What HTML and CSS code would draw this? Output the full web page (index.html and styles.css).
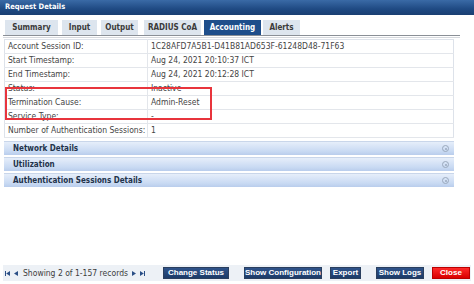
FILE: index.html
```html
<!DOCTYPE html>
<html>
<head>
<meta charset="utf-8">
<link rel="stylesheet" href="styles.css">
</head>
<body>
<div class="dialog">
  <div class="titlebar">Request Details</div>
  <div class="tabs">
    <div class="tab t1">Summary</div>
    <div class="tab t2">Input</div>
    <div class="tab t3">Output</div>
    <div class="tab t4">RADIUS CoA</div>
    <div class="tab t5 active">Accounting</div>
    <div class="tab t6">Alerts</div>
  </div>
  <div class="tabline"></div>
  <div class="content">
    <table class="details">
      <tr><td class="lbl">Account Session ID:</td><td>1C28AFD7A5B1-D41B81AD653F-61248D48-71F63</td></tr>
      <tr><td class="lbl">Start Timestamp:</td><td>Aug 24, 2021 20:10:37 ICT</td></tr>
      <tr><td class="lbl">End Timestamp:</td><td>Aug 24, 2021 20:12:28 ICT</td></tr>
      <tr><td class="lbl">Status:</td><td>Inactive</td></tr>
      <tr><td class="lbl">Termination Cause:</td><td>Admin-Reset</td></tr>
      <tr><td class="lbl">Service Type:</td><td>-</td></tr>
      <tr><td class="lbl">Number of Authentication Sessions:</td><td>1</td></tr>
    </table>
    <div class="highlight"></div>
    <div class="sections">
      <div class="section"><span>Network Details</span><i class="circ"></i></div>
      <div class="section"><span>Utilization</span><i class="circ"></i></div>
      <div class="section"><span>Authentication Sessions Details</span><i class="circ"></i></div>
    </div>
  </div>
  <div class="footer">
    <div class="pager">
      <svg class="nav" width="5" height="5" viewBox="0 0 5 5"><rect x="0" y="0" width="1" height="5" fill="#2b4f86"/><polygon points="5,0 1.2,2.5 5,5" fill="#2b4f86"/></svg>
      <svg class="nav" width="4" height="5" viewBox="0 0 4 5"><polygon points="4,0 0,2.5 4,5" fill="#2b4f86"/></svg>
      <span class="ptext">Showing 2 of 1-157 records</span>
      <svg class="nav" width="4" height="5" viewBox="0 0 4 5"><polygon points="0,0 4,2.5 0,5" fill="#2b4f86"/></svg>
      <svg class="nav" width="5" height="5" viewBox="0 0 5 5"><polygon points="0,0 3.8,2.5 0,5" fill="#2b4f86"/><rect x="4" y="0" width="1" height="5" fill="#2b4f86"/></svg>
    </div>
    <div class="btns">
      <div class="btn b1">Change Status</div>
      <div class="btn b2">Show Configuration</div>
      <div class="btn b3">Export</div>
      <div class="btn b4">Show Logs</div>
      <div class="btn close">Close</div>
    </div>
  </div>
</div>
</body>
</html>
```
FILE: styles.css
```css
html, body { margin: 0; padding: 0; background: #fff; }
body { width: 474px; height: 284px; overflow: hidden; font-family: "DejaVu Sans Condensed", "DejaVu Sans", sans-serif; }
.dialog { position: relative; width: 474px; height: 284px; }
.titlebar {
  height: 15px; line-height: 14px; padding-left: 5px;
  background: linear-gradient(#3a6aa6, #1f4a83 60%, #1a3f72);
  color: #fff; font-weight: bold; font-size: 7.5px;
}
.tabs { display: flex; gap: 4px; margin: 5px 0 0 5px; height: 15px; }
.tab {
  box-sizing: border-box; white-space: nowrap;
  background: #dde5ee; color: #3a3a3a; font-weight: bold; font-size: 8px;
  line-height: 15px; text-align: center;
}
.t1 { width: 53px; }
.t2 { width: 35px; }
.t3 { width: 37px; }
.t4 { width: 57px; margin-left: 2px; }
.t5 { width: 57px; margin-left: -1px; }
.t6 { width: 37px; margin-left: -2px; }
.tab.active { background: #1e4e8b; color: #fff; }
.tabline { margin: 0 14px 0 3px; height: 1px; border-top: 1px solid #8a8f96; border-bottom: 1px solid #d6d9de; }
.content { position: relative; margin: 1px 0 0 4px; width: 450px; }
.details { width: 450px; border-collapse: collapse; border: 1px solid #dde2ea; font-size: 8.5px; color: #444; }
.details td { height: 13px; padding: 0 0 0 3px; border-bottom: 1px solid #e3e6eb; white-space: nowrap; line-height: 13px; }
.details td.lbl { width: 139px; border-right: 1px solid #e3e6eb; }
.highlight { position: absolute; left: 1px; top: 48px; width: 203px; height: 29px; border: 2.5px solid #e8343c; }
.sections { display: flex; flex-direction: column; gap: 2px; margin-top: 3px; }
.section {
  height: 13px; display: flex; align-items: center; justify-content: space-between;
  padding: 0 5px 0 9px; border-top: 1px solid #c9d6ea;
  background: linear-gradient(#e6eefa, #c9daf3 70%, #b9cdec);
  font-size: 8px; font-weight: bold; color: #22324a; white-space: nowrap;
}
.circ { width: 5px; height: 5px; border: 1px solid #9aa8bc; border-radius: 50%; position: relative; }
.circ::after { content: ""; position: absolute; left: 1.5px; top: 1.5px; width: 2px; height: 2px; border-radius: 50%; background: #9aa8bc; }
.footer {
  position: absolute; left: 3px; top: 265px; width: 468px; height: 16px;
  display: flex; align-items: center; justify-content: space-between;
  background: #edf1f6;
}
.pager { display: flex; align-items: center; gap: 3px; padding-left: 2px; font-size: 8.5px; color: #3d3d3d; white-space: nowrap; }
.ptext { margin: 0 1px 0 1px; }
.nav { display: block; margin-right: 1px; }
.btns { display: flex; gap: 8px; padding-right: 1px; }
.btn {
  box-sizing: border-box; white-space: nowrap; text-align: center;
  height: 12px; line-height: 10px; font-size: 8px; font-weight: bold; color: #fff;
  background: linear-gradient(#2f538a, #1c3b68); font-family: "Liberation Sans", Arial, sans-serif;
  border: 1px solid #2a3f5e;
}
.b1 { width: 66px; }
.b2 { width: 78px; margin-left: 7px; }
.b3 { width: 31px; }
.b4 { width: 48px; margin-left: 7px; }
.btn.close { width: 38px; background: linear-gradient(#ff2a2a, #d90000); border-color: #b00; }
```
